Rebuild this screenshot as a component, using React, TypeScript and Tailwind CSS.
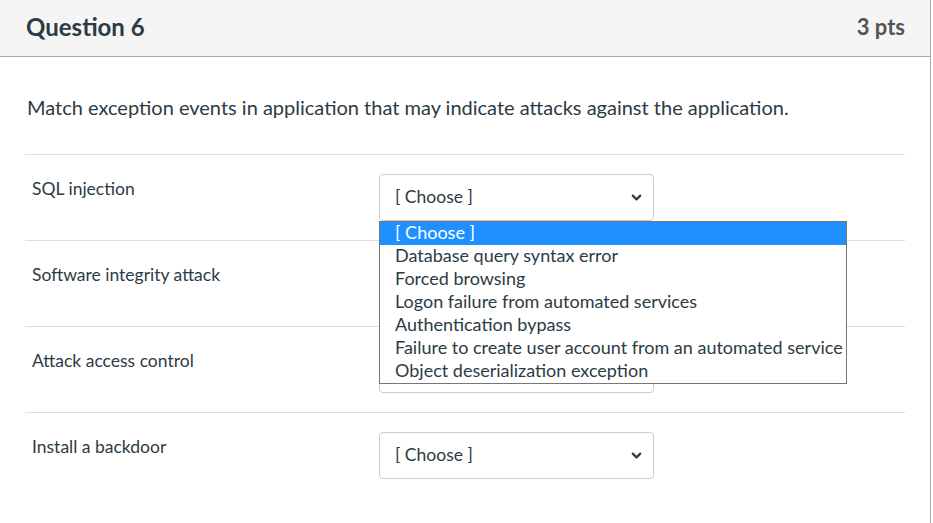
import { ChevronDown } from "lucide-react";

const rows = [
  "SQL injection",
  "Software integrity attack",
  "Attack access control",
  "Install a backdoor",
];

const options = [
  "[ Choose ]",
  "Database query syntax error",
  "Forced browsing",
  "Logon failure from automated services",
  "Authentication bypass",
  "Failure to create user account from an automated service",
  "Object deserialization exception",
];

function SelectBox() {
  return (
    <div className="w-[275px] h-[47px] border border-[#c7cdd1] rounded-[4px] bg-white flex items-center justify-between pl-[15px] pr-[9px]">
      <span className="text-[17.5px] text-[#2d3b45]">[ Choose ]</span>
      <ChevronDown className="w-[15px] h-[15px] text-[#2d3b45]" strokeWidth={3.5} />
    </div>
  );
}

export default function App() {
  return (
    <div className="w-[933px] h-[523px] bg-white overflow-hidden font-['Lato',sans-serif] text-[#2d3b45]">
      <div className="w-[931px] h-full border-r border-[#aaaaaa] relative">
        <div className="h-[57px] bg-[#f5f5f5] border-b border-[#aaaaaa] flex items-center justify-between pl-[26px] pr-[25px]">
          <h2 className="text-[24px] font-bold text-[#2d3b45] leading-none -mt-[2px]">Question 6</h2>
          <span className="text-[22px] font-bold text-[#545454] leading-none -mt-[2px]">3 pts</span>
        </div>
        <div className="pl-[25px] pr-[25px]">
          <p className="pt-[38px] pb-[35px] pl-[2px] text-[20px] leading-[24px]">
            Match exception events in application that may indicate attacks against the application.
          </p>
          {rows.map((label) => (
            <div key={label} className="border-t border-[#dddddd] h-[86px] flex items-start">
              <div className="w-[354px] pl-[7px] pt-[22px] text-[17.5px] leading-[24px]">{label}</div>
              <div className="pt-[19px]">
                <SelectBox />
              </div>
            </div>
          ))}
        </div>
        <ul className="absolute left-[379px] top-[221px] w-[468px] bg-white border border-[#767676] text-[18px] text-[#2d3b45]">
          {options.map((opt, i) => (
            <li
              key={opt}
              className={
                i === 0
                  ? "pl-[15px] pb-[2px] leading-[21px] bg-[#1e90ff] text-white"
                  : "pl-[15px] pb-[2px] leading-[21px]"
              }
            >
              {opt}
            </li>
          ))}
        </ul>
      </div>
    </div>
  );
}
